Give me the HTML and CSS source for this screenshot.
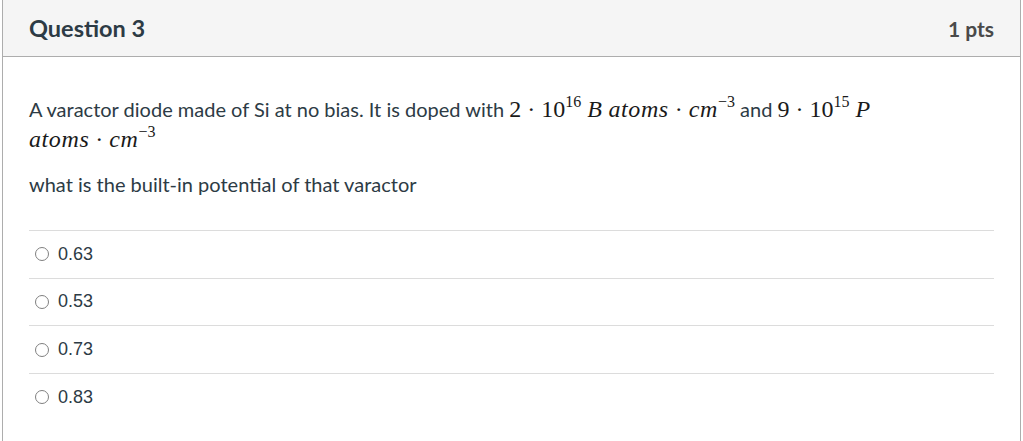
FILE: index.html
```html
<!DOCTYPE html>
<html>
<head>
<meta charset="utf-8">
<link rel="stylesheet" href="styles.css">
</head>
<body>
<div class="question">
  <div class="header">
    <span class="title">Question 3</span>
    <span class="pts">1 pts</span>
  </div>
  <div class="content">
    <p class="text">A varactor diode made of Si at no bias. It is doped with <span class="m">2 · 10<sup>16</sup> <i>B</i> <i>atoms</i> · <i>cm</i><sup>−3</sup></span> and <span class="m">9 · 10<sup>15</sup> <i>P</i></span> <span class="m"><i>atoms</i> · <i>cm</i><sup>−3</sup></span></p>
    <p class="text ask">what is the built-in potential of that varactor</p>
    <div class="answers">
      <div class="answer"><span class="radio"></span><span class="label">0.63</span></div>
      <div class="answer"><span class="radio"></span><span class="label">0.53</span></div>
      <div class="answer"><span class="radio"></span><span class="label">0.73</span></div>
      <div class="answer"><span class="radio"></span><span class="label">0.83</span></div>
    </div>
  </div>
</div>
</body>
</html>
```
FILE: styles.css
```css
html, body {
  margin: 0;
  padding: 0;
  background: #ffffff;
}
body {
  font-family: Lato, "Liberation Sans", sans-serif;
  color: #2d3b45;
}
.question {
  margin: -1px 0 0 2px;
  width: 1017px;
  border: 1px solid #adadad;
  height: 460px;
}
.header {
  background: #f5f5f5;
  border-bottom: 1px solid #adadad;
  height: 57px;
  box-sizing: border-box;
  display: flex;
  justify-content: space-between;
  align-items: center;
  padding: 0 26px 0 26px;
}
.title {
  font-size: 23.5px;
  font-weight: 700;
}
.pts {
  font-size: 21px;
  font-weight: 700;
  color: #4a4a4a;
}
.content {
  padding: 37px 26px 0 26px;
}
.text {
  font-size: 20px;
  line-height: 30px;
  margin: 0;
  max-width: 940px;
}
.ask {
  margin-top: 15px;
}
.m {
  font-family: "Liberation Serif", "DejaVu Serif", serif;
  font-size: 24px;
  line-height: 1;
  color: #1a1a1a;
  white-space: nowrap;
}
.m i {
  font-style: italic;
  letter-spacing: 0.6px;
}
.m sup {
  font-size: 16px;
  vertical-align: 10px;
  line-height: 0;
}
.answers {
  margin-top: 31px;
}
.answer {
  border-top: 1px solid #dcdcdc;
  height: 47.67px;
  box-sizing: border-box;
  display: flex;
  align-items: center;
  padding-left: 6px;
}
.radio {
  width: 12px;
  height: 12px;
  border: 1px solid #808080;
  border-radius: 50%;
  margin-right: 9px;
}
.label {
  font-family: "Liberation Sans", Arial, sans-serif;
  font-size: 18px;
  color: #2d3b45;
}
```
